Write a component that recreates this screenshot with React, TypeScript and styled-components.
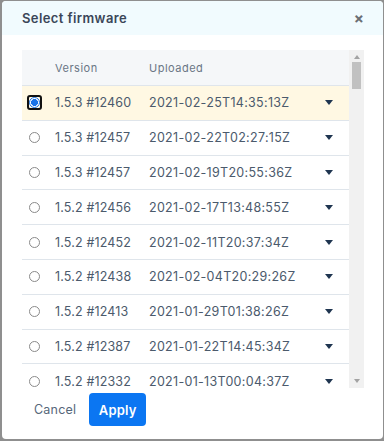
import React, { useState } from 'react';
import styled, { createGlobalStyle } from 'styled-components';

const GlobalStyle = createGlobalStyle`
  html, body {
    margin: 0;
    padding: 0;
    background: #8f8f8f;
  }
  body {
    font-family: Inter, Roboto, "Noto Sans", sans-serif;
  }
`;

type Firmware = { version: string; build: number; uploaded: string };

const firmwares: Firmware[] = [
  { version: '1.5.3', build: 12460, uploaded: '2021-02-25T14:35:13Z' },
  { version: '1.5.3', build: 12457, uploaded: '2021-02-22T02:27:15Z' },
  { version: '1.5.3', build: 12457, uploaded: '2021-02-19T20:55:36Z' },
  { version: '1.5.2', build: 12456, uploaded: '2021-02-17T13:48:55Z' },
  { version: '1.5.2', build: 12452, uploaded: '2021-02-11T20:37:34Z' },
  { version: '1.5.2', build: 12438, uploaded: '2021-02-04T20:29:26Z' },
  { version: '1.5.2', build: 12413, uploaded: '2021-01-29T01:38:26Z' },
  { version: '1.5.2', build: 12387, uploaded: '2021-01-22T14:45:34Z' },
  { version: '1.5.2', build: 12332, uploaded: '2021-01-13T00:04:37Z' },
];

function App() {
  const [selected, setSelected] = useState(0);

  return (
    <>
      <GlobalStyle />
      <Screen>
        <Modal>
          <Header>
            <Title>Select firmware</Title>
            <Close aria-label="Close">×</Close>
          </Header>
          <Body>
            <TableArea>
              <Table>
                <HeadRow>
                  <Cell />
                  <HeadCell>Version</HeadCell>
                  <HeadCell>Uploaded</HeadCell>
                  <Cell />
                </HeadRow>
                {firmwares.map((f, i) => (
                  <Row key={i} $active={i === selected} onClick={() => setSelected(i)}>
                    <Cell>
                      <RadioWrap $focused={i === selected}>
                        <Radio $checked={i === selected} />
                      </RadioWrap>
                    </Cell>
                    <VersionCell>
                      {f.version} #{f.build}
                    </VersionCell>
                    <Cell>{f.uploaded}</Cell>
                    <Cell>
                      <Caret />
                    </Cell>
                  </Row>
                ))}
              </Table>
              <ScrollTrack>
                <ArrowUp />
                <Thumb />
                <TrackFill />
                <ArrowDown />
              </ScrollTrack>
            </TableArea>
            <Footer>
              <CancelButton>Cancel</CancelButton>
              <ApplyButton>Apply</ApplyButton>
            </Footer>
          </Body>
        </Modal>
      </Screen>
    </>
  );
}

const Screen = styled.div`
  width: 384px;
  height: 441px;
  padding: 1px 1px 2px 2px;
  box-sizing: border-box;
`;

const Modal = styled.div`
  width: 100%;
  height: 100%;
  background: #ffffff;
  border-radius: 4px;
  overflow: hidden;
  display: flex;
  flex-direction: column;
`;

const Header = styled.div`
  height: 34px;
  background: #f1fbfe;
  display: flex;
  align-items: center;
  justify-content: space-between;
  padding: 0 19px 0 20px;
  flex-shrink: 0;
`;

const Title = styled.div`
  font-size: 13px;
  font-weight: 600;
  color: #3a4658;
  letter-spacing: 0.4px;
`;

const Close = styled.div`
  font-size: 15px;
  font-weight: 700;
  color: #6b6f75;
  line-height: 1;
`;

const Body = styled.div`
  padding: 15px 19px 0 20px;
  display: flex;
  flex-direction: column;
`;

const TableArea = styled.div`
  display: flex;
  height: 338px;
  overflow: hidden;
`;

const Table = styled.div`
  flex: 1;
  display: flex;
  flex-direction: column;
`;

const HeadRow = styled.div`
  display: grid;
  grid-template-columns: 33px 94px 1fr 40px;
  height: 35px;
  align-items: center;
  background: #f5f7f9;
  border-bottom: 1px solid #dfe5eb;
  flex-shrink: 0;
`;

const Row = styled.div<{ $active: boolean }>`
  display: grid;
  grid-template-columns: 33px 94px 1fr 40px;
  height: 33.8px;
  align-items: center;
  background: ${(p) => (p.$active ? '#fff8e3' : '#ffffff')};
  border-bottom: 1px solid #dfe5eb;
  flex-shrink: 0;
  font-size: 12.5px;
  color: #4b5a6c;
  letter-spacing: 0.3px;
  cursor: pointer;
`;

const Cell = styled.div`
  display: flex;
  align-items: center;
`;

const VersionCell = styled(Cell)`
  letter-spacing: 0.15px;
  white-space: nowrap;
`;

const HeadCell = styled(Cell)`
  font-size: 11px;
  color: #6a7685;
  letter-spacing: 0.5px;
`;

const RadioWrap = styled.div<{ $focused: boolean }>`
  width: 15px;
  height: 15px;
  margin-left: 5px;
  border-radius: 3px;
  box-sizing: border-box;
  border: ${(p) => (p.$focused ? '2px solid #111111' : '2px solid transparent')};
  display: flex;
  align-items: center;
  justify-content: center;
`;

const Radio = styled.div<{ $checked: boolean }>`
  width: 11px;
  height: 11px;
  border-radius: 50%;
  box-sizing: border-box;
  border: 1px solid ${(p) => (p.$checked ? '#1a73e8' : '#8a8a8a')};
  background: ${(p) => (p.$checked ? 'radial-gradient(circle, #1a73e8 0 3.2px, #ffffff 3.7px)' : '#ffffff')};
`;

const Caret = styled.div`
  width: 0;
  height: 0;
  margin-left: 16px;
  border-left: 4.5px solid transparent;
  border-right: 4.5px solid transparent;
  border-top: 5px solid #1f3550;
`;

const ScrollTrack = styled.div`
  width: 15px;
  background: #f1f1f1;
  display: flex;
  flex-direction: column;
  align-items: center;
  flex-shrink: 0;
`;

const ArrowUp = styled.div`
  margin: 5px 0 3px;
  width: 0;
  height: 0;
  border-left: 3.5px solid transparent;
  border-right: 3.5px solid transparent;
  border-bottom: 4px solid #a3a3a3;
`;

const ArrowDown = styled.div`
  margin: 3px 0 5px;
  width: 0;
  height: 0;
  border-left: 3.5px solid transparent;
  border-right: 3.5px solid transparent;
  border-top: 4px solid #a3a3a3;
`;

const Thumb = styled.div`
  width: 9px;
  height: 27px;
  background: #c1c1c1;
`;

const TrackFill = styled.div`
  flex: 1;
`;

const Footer = styled.div`
  display: flex;
  align-items: center;
  gap: 13px;
  padding: 5px 0 0 0;
`;

const CancelButton = styled.button`
  border: none;
  background: none;
  padding: 0 0 0 12px;
  font-family: inherit;
  font-size: 12.5px;
  color: #56677a;
  letter-spacing: 0.2px;
  cursor: pointer;
`;

const ApplyButton = styled.button`
  width: 57px;
  height: 33px;
  border: none;
  border-radius: 4px;
  background: #0b76f2;
  color: #ffffff;
  font-family: inherit;
  font-size: 13px;
  font-weight: 600;
  letter-spacing: 0.2px;
  cursor: pointer;
`;

export default App;
